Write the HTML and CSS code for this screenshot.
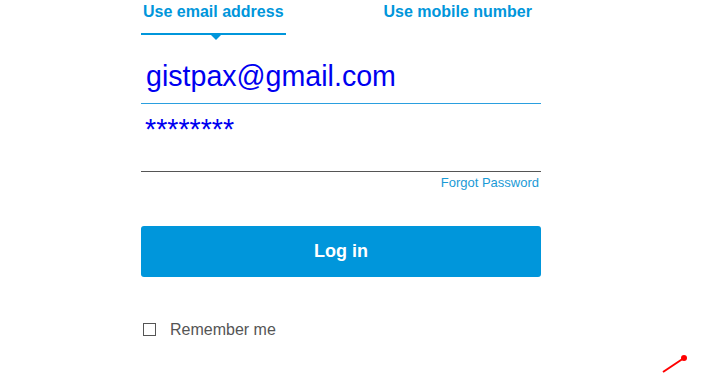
FILE: index.html
```html
<!DOCTYPE html>
<html>
<head>
<meta charset="utf-8">
<link rel="stylesheet" href="styles.css">
</head>
<body>
<div class="form">
  <div class="tabs">
    <div class="tab active">Use email address<span class="caret"></span></div>
    <div class="tab other">Use mobile number</div>
  </div>
  <div class="field email">gistpax@gmail.com</div>
  <div class="field password">********</div>
  <div class="forgot">Forgot Password</div>
  <div class="btn">Log in</div>
  <div class="remember"><span class="box"></span><span class="label">Remember me</span></div>
</div>
<svg class="mark" width="30" height="20" viewBox="0 0 30 20"><line x1="3" y1="18" x2="24" y2="4" stroke="#ff0000" stroke-width="2"/><circle cx="24" cy="4" r="3" fill="#ff0000"/></svg>
</body>
</html>
```
FILE: styles.css
```css
html, body { margin: 0; padding: 0; background: #fff; }
body { font-family: "Liberation Sans", Arial, sans-serif; position: relative; width: 711px; height: 373px; overflow: hidden; }
.form { width: 400px; margin-left: 141px; }
.tabs { display: flex; justify-content: space-between; }
.tab { font-weight: 700; font-size: 16px; line-height: 20px; color: #0096db; padding: 2px 2px 11px; box-sizing: border-box; }
.tab.active { width: 145px; border-bottom: 2px solid #0096db; position: relative; }
.tab.other { padding-right: 9px; }
.caret { position: absolute; left: 70px; bottom: -7px; width: 0; height: 0; border-left: 5px solid transparent; border-right: 5px solid transparent; border-top: 5px solid #0096db; }
.field { font-size: 28.6px; line-height: 34px; color: #0000f0; }
.email { margin-top: 24px; padding: 0 0 10px 5px; border-bottom: 1px solid #2a9fdf; }
.password { padding: 8px 0 25px 4px; border-bottom: 1px solid #555; }
.forgot { margin-top: 3px; text-align: right; padding-right: 2px; font-size: 13px; line-height: 16px; color: #1a9ad6; }
.btn { margin-top: 35px; height: 51px; line-height: 51px; background: #0096db; border-radius: 3px; color: #fff; text-align: center; font-weight: 700; font-size: 18px; }
.remember { margin-top: 43px; display: flex; align-items: flex-start; }
.box { width: 13px; height: 13px; box-sizing: border-box; border: 1px solid #555; margin: 3px 0 0 2px; }
.label { margin-left: 14px; font-size: 16px; line-height: 20px; color: #555; }
.mark { position: absolute; left: 660px; top: 354px; }
```
